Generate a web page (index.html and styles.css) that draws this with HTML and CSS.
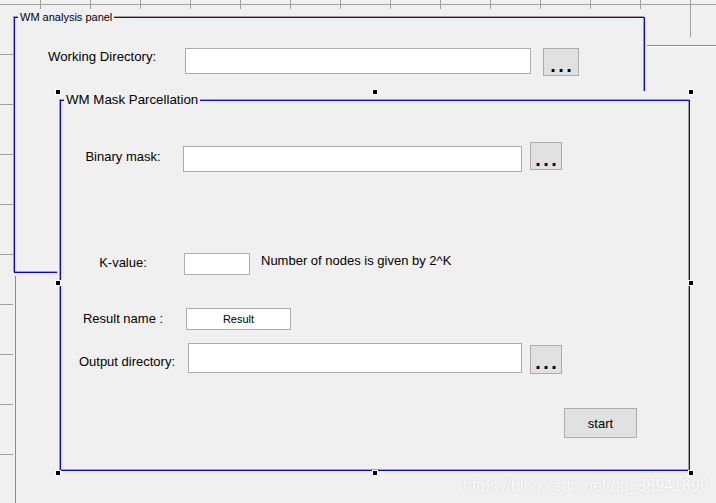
FILE: index.html
```html
<!DOCTYPE html>
<html>
<head>
<meta charset="utf-8">
<link rel="stylesheet" href="styles.css">
</head>
<body>
<div class="canvas">
  <svg class="grid" width="716" height="503" viewBox="0 0 716 503">
    <g stroke="#a0a0a0" stroke-width="1" shape-rendering="crispEdges">
      <line x1="0" y1="4.5" x2="716" y2="4.5"/>
      <line x1="40.5" y1="0" x2="40.5" y2="9"/>
      <line x1="90.5" y1="0" x2="90.5" y2="9"/>
      <line x1="140.5" y1="0" x2="140.5" y2="9"/>
      <line x1="190.5" y1="0" x2="190.5" y2="9"/>
      <line x1="240.5" y1="0" x2="240.5" y2="9"/>
      <line x1="290.5" y1="0" x2="290.5" y2="9"/>
      <line x1="340.5" y1="0" x2="340.5" y2="9"/>
      <line x1="390.5" y1="0" x2="390.5" y2="9"/>
      <line x1="440.5" y1="0" x2="440.5" y2="9"/>
      <line x1="490.5" y1="0" x2="490.5" y2="9"/>
      <line x1="540.5" y1="0" x2="540.5" y2="9"/>
      <line x1="590.5" y1="0" x2="590.5" y2="9"/>
      <line x1="640.5" y1="0" x2="640.5" y2="9"/>
      <line x1="690.5" y1="0" x2="690.5" y2="37"/>
      <line x1="0" y1="54.5" x2="13" y2="54.5"/>
      <line x1="0" y1="104.5" x2="13" y2="104.5"/>
      <line x1="0" y1="154.5" x2="13" y2="154.5"/>
      <line x1="0" y1="204.5" x2="13" y2="204.5"/>
      <line x1="0" y1="254.5" x2="13" y2="254.5"/>
      <line x1="0" y1="304.5" x2="13" y2="304.5"/>
      <line x1="0" y1="354.5" x2="13" y2="354.5"/>
      <line x1="0" y1="404.5" x2="13" y2="404.5"/>
      <line x1="0" y1="454.5" x2="13" y2="454.5"/>
      <line x1="15.5" y1="276" x2="15.5" y2="503" stroke="#8c8c8c"/>
      <line x1="647" y1="45.5" x2="716" y2="45.5" stroke="#8a8a8a"/>
      <line x1="647" y1="46.5" x2="716" y2="46.5" stroke="#ffffff"/>
    </g>
  </svg>

  <div class="panel panel-outer">
    <span class="panel-title title-outer">WM analysis panel</span>
    <div class="row row-wd">
      <span class="label label-wd">Working Directory:</span>
      <input class="edit edit-wd" type="text">
      <button class="btn-dots btn-wd">...</button>
    </div>
  </div>

  <div class="selection">
    <div class="panel panel-inner">
      <span class="panel-title title-inner">WM Mask Parcellation</span>
      <div class="row row-mask">
        <span class="label label-mask">Binary mask:</span>
        <input class="edit edit-mask" type="text">
        <button class="btn-dots btn-mask">...</button>
      </div>
      <div class="row row-k">
        <span class="label">K-value:</span>
        <input class="edit edit-k" type="text">
        <span class="note">Number of nodes is given by 2^K</span>
      </div>
      <div class="row row-result">
        <span class="label label-result">Result name :</span>
        <input class="edit edit-result" type="text" value="Result">
      </div>
      <div class="row row-out">
        <span class="label label-out">Output directory:</span>
        <input class="edit edit-out" type="text">
        <button class="btn-dots btn-out">...</button>
      </div>
      <div class="row row-start">
        <button class="btn-start">start</button>
      </div>
    </div>
    <span class="handle h-tl"></span>
    <span class="handle h-tm"></span>
    <span class="handle h-tr"></span>
    <span class="handle h-ml"></span>
    <span class="handle h-mr"></span>
    <span class="handle h-bl"></span>
    <span class="handle h-bm"></span>
    <span class="handle h-br"></span>
  </div>

  <div class="watermark">https://blog.csdn.net/qq_38941890</div>
</div>
</body>
</html>
```

FILE: styles.css
```css
html, body {
  margin: 0;
  padding: 0;
  background: #f0f0f0;
}

.canvas {
  position: relative;
  width: 716px;
  height: 503px;
  overflow: hidden;
  background: #f0f0f0;
  font-family: "Liberation Sans", Arial, sans-serif;
  font-size: 13px;
  color: #000;
}

.grid {
  position: absolute;
  left: 0;
  top: 0;
  display: block;
}

/* Panels */
.panel {
  box-sizing: border-box;
  border: 1px solid #0000ff;
  box-shadow: -1px -1px 0 #a0a0a0, inset -1px -1px 0 #a0a0a0;
}

.panel-outer {
  position: absolute;
  left: 14px;
  top: 17px;
  width: 631px;
  height: 256px;
}

.panel-title {
  position: absolute;
  left: 3px;
  padding: 0 2px;
  background: #f0f0f0;
  white-space: nowrap;
}

.title-outer {
  top: -8px;
  font-size: 11px;
  line-height: 15px;
}

.title-inner {
  top: -9px;
  font-size: 13.3px;
  line-height: 16px;
}

.selection {
  position: absolute;
  left: 57px;
  top: 91px;
  width: 637px;
  height: 385px;
  box-sizing: border-box;
  padding: 9px 0 0 3px;
  background: #f0f0f0;
}

.panel-inner {
  position: relative;
  width: 630px;
  height: 371px;
}

/* Rows */
.row {
  display: flex;
  align-items: flex-start;
}

.label {
  display: block;
  width: 100px;
  margin-left: 12px;
  text-align: center;
  line-height: 20px;
  white-space: nowrap;
}

.edit {
  display: block;
  box-sizing: border-box;
  margin: 0;
  padding: 0;
  border: 1px solid #acacac;
  background: #ffffff;
  font-family: "Liberation Sans", Arial, sans-serif;
  font-size: 13px;
  color: #000;
  outline: none;
}

.btn-dots {
  display: flex;
  justify-content: center;
  align-items: flex-start;
  box-sizing: border-box;
  margin: 0;
  padding: 6px 0 0 2.5px;
  border: 1px solid #adadad;
  background: #e1e1e1;
  color: #000;
  font-family: "Liberation Sans", Arial, sans-serif;
  font-weight: bold;
  font-size: 20px;
  line-height: 20px;
  letter-spacing: 2.5px;
}

/* Working directory row (outer panel) */
.row-wd {
  margin-top: 29px;
}

.label-wd {
  width: 137px;
  margin-left: 33px;
  text-align: left;
  font-size: 13.2px;
}

.edit-wd {
  width: 346px;
  height: 26px;
  margin-top: 1px;
}

.btn-wd {
  width: 36px;
  height: 28px;
  margin: 1px 0 0 12px;
}

/* Binary mask row */
.row-mask {
  margin-top: 41px;
}

.label-mask {
  margin-top: 5px;
}

.edit-mask {
  width: 339px;
  height: 26px;
  margin: 4px 0 0 10px;
}

.btn-mask {
  width: 32px;
  height: 28px;
  margin-left: 8px;
}

/* K-value row */
.row-k {
  margin-top: 81px;
}

.edit-k {
  width: 66px;
  height: 22px;
  margin-left: 11px;
}

.note {
  display: block;
  margin: -2px 0 0 11px;
  line-height: 20px;
  white-space: nowrap;
}

/* Result name row */
.row-result {
  margin-top: 33px;
}

.label-result {
  margin-top: 1px;
}

.edit-result {
  width: 105px;
  height: 22px;
  margin-left: 13px;
  font-size: 11px;
  text-align: center;
}

/* Output directory row */
.row-out {
  margin-top: 13px;
}

.label-out {
  margin: 9px 0 0 16px;
}

.edit-out {
  width: 334px;
  height: 30px;
  margin-left: 11px;
}

.btn-out {
  width: 32px;
  height: 29px;
  margin: 2px 0 0 8px;
}

/* Start row */
.row-start {
  margin-top: 34px;
}

.btn-start {
  display: block;
  box-sizing: border-box;
  width: 73px;
  height: 30px;
  margin: 0 0 0 503px;
  padding: 0;
  border: 1px solid #adadad;
  background: #e1e1e1;
  color: #000;
  font-family: "Liberation Sans", Arial, sans-serif;
  font-size: 13px;
}

/* Selection handles */
.handle {
  position: absolute;
  width: 4px;
  height: 4px;
  background: #000;
  border: 1px solid #fff;
}

.h-tl { left: -2px;  top: -2px; }
.h-tm { left: 315px; top: -2px; }
.h-tr { left: 631px; top: -2px; }
.h-ml { left: -2px;  top: 189px; }
.h-mr { left: 631px; top: 189px; }
.h-bl { left: -2px;  top: 379px; }
.h-bm { left: 315px; top: 379px; }
.h-br { left: 631px; top: 379px; }

/* Watermark */
.watermark {
  position: absolute;
  left: 463px;
  top: 476px;
  font-size: 16px;
  line-height: 20px;
  color: #fdfdfd;
  text-shadow: 0 0 1px #d2d2d2, 0 0 2px #dcdcdc;
  white-space: nowrap;
}
```
